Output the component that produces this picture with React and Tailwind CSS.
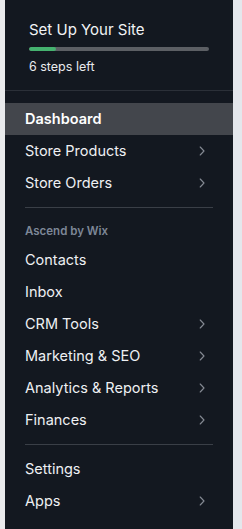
import React from 'react';

const Chevron = () => (
  <svg width="8" height="12" viewBox="0 0 8 12" fill="none" className="shrink-0">
    <path d="M2.2 2 6 6 2.2 10" stroke="#858a93" strokeWidth="1.1" strokeLinecap="round" strokeLinejoin="round" />
  </svg>
);

const Item = ({ label, active, arrow }) => (
  <div
    className={`h-8 flex items-center justify-between pl-5 pr-[27px] text-[14.5px] ${
      active ? 'bg-[#43464c] font-semibold text-white' : 'text-[#eef0f3]'
    }`}
  >
    <span>{label}</span>
    {arrow && <Chevron />}
  </div>
);

const Divider = () => <div className="mx-5 my-2 h-px bg-[#3a3f47]" />;

export default function App() {
  return (
    <div
      className="w-[242px] h-[529px] flex bg-[#e4e7ec] overflow-hidden"
      style={{ fontFamily: 'Inter, "Noto Sans", sans-serif' }}
    >
      <div className="w-[5px] shrink-0 bg-[#e9eaec]" />
      <div className="w-[228px] shrink-0 bg-[#131820] flex flex-col">
        {/* Setup progress */}
        <div className="px-6 pt-5 pb-[13px] border-b border-[#2b3038]">
          <div className="text-[15px] leading-5 text-[#f1f3f5]">Set Up Your Site</div>
          <div className="mt-[7px] h-[4px] w-[180px] rounded-full bg-[#5c5f64] overflow-hidden">
            <div className="h-full w-[27px] bg-[#45b26f] rounded-full" />
          </div>
          <div className="mt-[6px] text-[12.5px] leading-5 text-[#e8eaed]">6 steps left</div>
        </div>

        <div className="pt-3">
          <Item label="Dashboard" active />
          <Item label="Store Products" arrow />
          <Item label="Store Orders" arrow />
          <Divider />
          <div className="pl-5 pt-[7px] pb-[5px] text-[11.5px] leading-4 font-semibold text-[#7d8797]">
            Ascend by Wix
          </div>
          <Item label="Contacts" />
          <Item label="Inbox" />
          <Item label="CRM Tools" arrow />
          <Item label="Marketing & SEO" arrow />
          <Item label="Analytics & Reports" arrow />
          <Item label="Finances" arrow />
          <Divider />
          <Item label="Settings" />
          <Item label="Apps" arrow />
        </div>
      </div>
      <div className="flex-1" />
    </div>
  );
}
